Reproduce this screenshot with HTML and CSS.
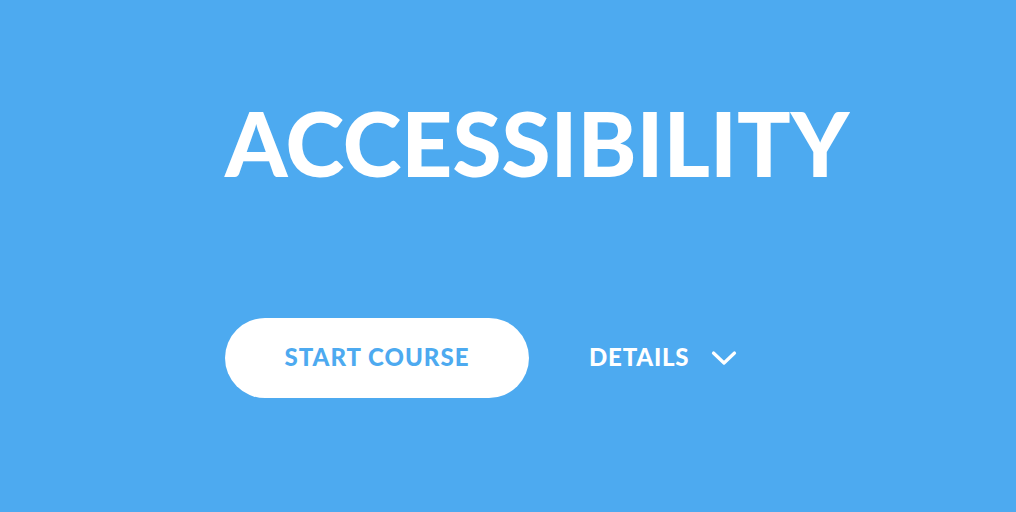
FILE: index.html
```html
<!DOCTYPE html>
<html lang="en">
<head>
	<meta charset="UTF-8">
	<title>Accessibility</title>
	<link rel="stylesheet" href="styles.css">
</head>
<body>
	<section class="hero">
		<h1 class="hero-title">ACCESSIBILITY</h1>
		<div class="hero-actions">
			<a class="btn-start" href="#">START COURSE</a>
			<a class="btn-details" href="#">DETAILS
				<svg class="chevron" width="26" height="16" viewBox="0 0 26 16"><path d="M2.5 3 L13 13 L23.5 3" fill="none" stroke="#fff" stroke-width="3.2" stroke-linecap="round" stroke-linejoin="round"/></svg>
			</a>
		</div>
	</section>
</body>
</html>
```

FILE: styles.css
```css
body,h1{margin: 0;padding: 0;}
body{background: #4DAAF0;font-family: Lato, "Open Sans", sans-serif;}
.hero{height: 512px;padding: 88px 0 0 225px;box-sizing: border-box;}
.hero-title{font-size: 89px;font-weight: 900;color: #fff;line-height: 110px;letter-spacing: 0;}
.hero-actions{display: flex;align-items: center;margin-top: 120px;}
.btn-start{display: flex;align-items: center;justify-content: center;width: 304px;height: 80px;padding-bottom: 3px;box-sizing: border-box;border-radius: 40px;background: #fff;color: #4DAAF0;font-size: 24px;font-weight: 900;letter-spacing: 1px;text-decoration: none;}
.btn-details{display: flex;align-items: center;margin-left: 60px;padding-bottom: 3px;color: #fff;font-size: 24px;font-weight: 900;letter-spacing: 0.8px;text-decoration: none;}
.chevron{margin-left: 22px;margin-top: 2px;}
```
